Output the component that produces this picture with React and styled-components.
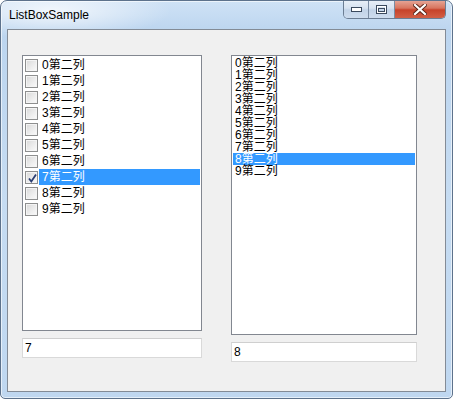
import React from "react";
import styled, { createGlobalStyle } from "styled-components";

const GlobalStyle = createGlobalStyle`
  html, body { margin: 0; padding: 0; background: #ffffff; }
  body { font-family: "Liberation Sans", "Noto Sans CJK SC", sans-serif; }
  * { box-sizing: border-box; }
`;

const Window = styled.div`
  width: 453px;
  height: 399px;
  border: 1px solid #5d728c;
  border-radius: 7px 7px 5px 5px;
  background:
    radial-gradient(ellipse 120px 28px at 50px 10px, rgba(255,255,255,0.75), rgba(255,255,255,0) 100%),
    linear-gradient(to bottom, #cfe2f6 0px, #bcd5ef 30px, #c6dcf2 200px, #bfd7f0 399px);
  display: flex;
  flex-direction: column;
  overflow: hidden;
  box-shadow: inset 0 0 0 1px rgba(255,255,255,0.6);
`;

const TitleBar = styled.div`
  height: 28px;
  display: flex;
  align-items: flex-start;
  padding-left: 8px;
  flex: none;
`;

const Title = styled.div`
  margin-top: 7px;
  font-family: "Liberation Sans", "Noto Sans", sans-serif;
  font-size: 12px;
  line-height: 14px;
  color: #000;
`;

const Caption = styled.div`
  margin-left: auto;
  margin-right: 6px;
  margin-top: -1px;
  height: 19px;
  display: flex;
  border: 1px solid #6b7d93;
  border-top: none;
  border-radius: 0 0 5px 5px;
  overflow: hidden;
`;

const CapButton = styled.div`
  width: ${(p) => p.$w}px;
  height: 100%;
  display: flex;
  align-items: center;
  justify-content: center;
  border-left: ${(p) => (p.$first ? "none" : "1px solid #7a8ca3")};
  background: ${(p) =>
    p.$close
      ? "linear-gradient(to bottom, #e7a99b 0%, #d8755f 45%, #c7422a 55%, #d25f45 100%)"
      : "linear-gradient(to bottom, #e9f0f8 0%, #d7e3f1 45%, #c2d3e8 55%, #cddcee 100%)"};
`;

const Client = styled.div`
  flex: 1;
  margin: 0 6px 6px 6px;
  border: 1px solid #838b96;
  background: #f0f0f0;
  display: flex;
  align-items: flex-start;
  gap: 29px;
  padding: 25px 0 0 14px;
`;

const Column = styled.div`
  width: ${(p) => p.$w}px;
  display: flex;
  flex-direction: column;
  gap: 7px;
`;

const ListBox = styled.div`
  height: ${(p) => p.$h}px;
  border: 1px solid #828790;
  background: #ffffff;
  padding: 1px 0;
  overflow: hidden;
  font-size: 12px;
  color: #000;
`;

const CheckRow = styled.div`
  height: 16px;
  display: flex;
  align-items: flex-start;
  padding-left: 2px;
`;

const Box = styled.div`
  width: 13px;
  height: 13px;
  margin-top: 2px;
  border: 1px solid #8e8f8f;
  background: linear-gradient(135deg, #d8d8d8 0%, #eeeeee 60%, #fbfbfb 100%);
  box-shadow: inset 0 0 0 1px #f4f4f4;
  position: relative;
  flex: none;
`;

const Check = styled.svg`
  position: absolute;
  left: 1px;
  top: 1px;
`;

const CheckLabel = styled.div`
  flex: 1;
  margin: 0 1px 0 1px;
  height: 16px;
  line-height: 16px;
  padding-left: 3px;
  white-space: nowrap;
  background: ${(p) => (p.$sel ? "#3399ff" : "transparent")};
  color: ${(p) => (p.$sel ? "#ffffff" : "#000000")};
`;

const PlainRow = styled.div`
  height: 12px;
  line-height: 12px;
  margin: 0 1px;
  padding-left: 2px;
  white-space: nowrap;
  background: ${(p) => (p.$sel ? "#3399ff" : "transparent")};
  color: ${(p) => (p.$sel ? "#ffffff" : "#000000")};
  position: relative;
`;

const TextBox = styled.div`
  height: 20px;
  border: 1px solid #d9d9d9;
  border-top-color: #cfcfcf;
  background: #ffffff;
  font-size: 12px;
  line-height: 14px;
  padding: 2px 0 0 2px;
  color: #000;
`;

const items = Array.from({ length: 10 }, (_, i) => `${i}第二列`);

export default function App() {
  return (
    <>
      <GlobalStyle />
      <Window>
        <TitleBar>
          <Title>ListBoxSample</Title>
          <Caption>
            <CapButton $w={24} $first>
              <svg width="11" height="5" viewBox="0 0 11 5">
                <rect x="0.5" y="0.5" width="10" height="4" fill="#ffffff" stroke="#3b4a5e" />
              </svg>
            </CapButton>
            <CapButton $w={26}>
              <svg width="11" height="9" viewBox="0 0 11 9">
                <rect x="0.5" y="0.5" width="10" height="8" fill="none" stroke="#3b4a5e" />
                <rect x="1.5" y="1.5" width="8" height="6" fill="none" stroke="#ffffff" />
                <rect x="2.5" y="3.5" width="6" height="3" fill="none" stroke="#3b4a5e" />
              </svg>
            </CapButton>
            <CapButton $w={51} $close>
              <svg width="14" height="11" viewBox="0 0 14 11">
                <path d="M2 1 L12 10 M12 1 L2 10" stroke="#5a2418" strokeWidth="4" strokeLinecap="square" />
                <path d="M2 1 L12 10 M12 1 L2 10" stroke="#ffffff" strokeWidth="2.2" strokeLinecap="square" />
              </svg>
            </CapButton>
          </Caption>
        </TitleBar>
        <Client>
          <Column $w={180}>
            <ListBox $h={276}>
              {items.map((t, i) => (
                <CheckRow key={t}>
                  <Box>
                    {i === 7 && (
                      <Check width="11" height="11" viewBox="0 0 11 11">
                        <path d="M2 5.5 L4.3 8.5 L9 1.5" fill="none" stroke="#2c3f73" strokeWidth="1.8" />
                      </Check>
                    )}
                  </Box>
                  <CheckLabel $sel={i === 7}>{t}</CheckLabel>
                </CheckRow>
              ))}
            </ListBox>
            <TextBox>7</TextBox>
          </Column>
          <Column $w={186}>
            <ListBox $h={280}>
              {items.map((t, i) => (
                <PlainRow key={t} $sel={i === 8}>
                  {t}
                </PlainRow>
              ))}
            </ListBox>
            <TextBox>8</TextBox>
          </Column>
        </Client>
      </Window>
    </>
  );
}
